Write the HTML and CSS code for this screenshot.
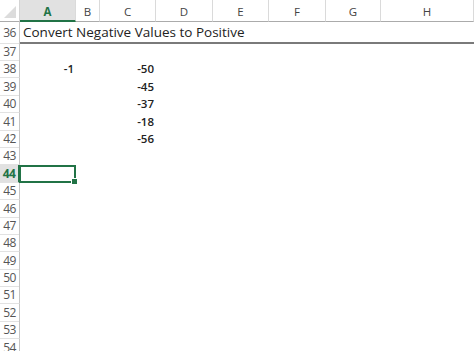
FILE: index.html
```html
<!DOCTYPE html>
<html lang="en">
<head>
  <meta charset="UTF-8">
  <title>Convert Negative Values to Positive</title>
  <link rel="stylesheet" href="styles.css">
</head>
<body>
  <div class="sheet">
    <div class="row head">
      <div class="corner"><span class="tri"></span></div>
      <div class="col active">A</div>
      <div class="col">B</div>
      <div class="col">C</div>
      <div class="col">D</div>
      <div class="col">E</div>
      <div class="col">F</div>
      <div class="col">G</div>
      <div class="col">H</div>
    </div>
    <div class="row title-row">
      <div class="num">36</div>
      <div class="title">Convert Negative Values to Positive</div>
    </div>
    <div class="row"><div class="num">37</div></div>
    <div class="row"><div class="num">38</div><div class="cell val">-1</div><div class="cell"></div><div class="cell val">-50</div></div>
    <div class="row"><div class="num">39</div><div class="cell"></div><div class="cell"></div><div class="cell val">-45</div></div>
    <div class="row"><div class="num">40</div><div class="cell"></div><div class="cell"></div><div class="cell val">-37</div></div>
    <div class="row"><div class="num">41</div><div class="cell"></div><div class="cell"></div><div class="cell val">-18</div></div>
    <div class="row"><div class="num">42</div><div class="cell"></div><div class="cell"></div><div class="cell val">-56</div></div>
    <div class="row"><div class="num">43</div></div>
    <div class="row"><div class="num active">44</div><div class="cell selected"><span class="handle"></span></div></div>
    <div class="row"><div class="num">45</div></div>
    <div class="row"><div class="num">46</div></div>
    <div class="row"><div class="num">47</div></div>
    <div class="row"><div class="num">48</div></div>
    <div class="row"><div class="num">49</div></div>
    <div class="row"><div class="num">50</div></div>
    <div class="row"><div class="num">51</div></div>
    <div class="row"><div class="num">52</div></div>
    <div class="row"><div class="num">53</div></div>
    <div class="row"><div class="num">54</div></div>
  </div>
</body>
</html>
```

FILE: styles.css
```css
body {
  margin: 0;
  background: #fff;
  font-family: 'Open Sans', 'Liberation Sans', sans-serif;
  overflow: hidden;
}
.sheet {
  width: 474px;
}
.row {
  display: grid;
  grid-template-columns: 20px 56px 24px 56px 57px 56px 57px 55px 1fr;
  height: 17.4px;
}
.head {
  height: 22px;
}
.corner {
  position: relative;
  background: #fff;
  border-right: 1px solid #d4d4d4;
  border-bottom: 1px solid #ababab;
}
.tri {
  position: absolute;
  right: 3px;
  bottom: 3px;
  width: 0;
  height: 0;
  border-left: 12px solid transparent;
  border-bottom: 12px solid #dcdcdc;
}
.col {
  display: flex;
  align-items: center;
  justify-content: center;
  font-size: 11.5px;
  color: #444;
  border-right: 1px solid #dadada;
  border-bottom: 1px solid #ababab;
  padding-top: 2px;
}
.col.active {
  background: #e1e1e1;
  color: #217346;
  font-weight: 700;
  border-bottom: 2px solid #217346;
}
.num {
  display: flex;
  align-items: center;
  justify-content: center;
  font-size: 12px;
  color: #555;
  border-right: 1px solid #c6c6c6;
  border-bottom: 1px solid #e2e2e2;
  box-sizing: border-box;
  letter-spacing: -0.6px;
}
.num.active {
  background: #e1e1e1;
  color: #217346;
  font-weight: 700;
  border-right: 2px solid #217346;
}
.title-row {
  height: 21px;
}
.title {
  grid-column: 2 / -1;
  font-size: 13.5px;
  color: #222;
  padding-left: 3px;
  line-height: 20px;
  border-bottom: 2px solid #7a7a7a;
  box-sizing: border-box;
}
.cell {
  box-sizing: border-box;
}
.val {
  font-size: 11.5px;
  font-weight: 600;
  color: #222;
  text-align: right;
  padding-right: 2px;
  line-height: 17px;
}
.selected {
  position: relative;
  border: 2px solid #217346;
  margin-left: -1px;
}
.handle {
  position: absolute;
  right: -4px;
  bottom: -4px;
  width: 5px;
  height: 5px;
  background: #217346;
  border: 1px solid #fff;
}
```
